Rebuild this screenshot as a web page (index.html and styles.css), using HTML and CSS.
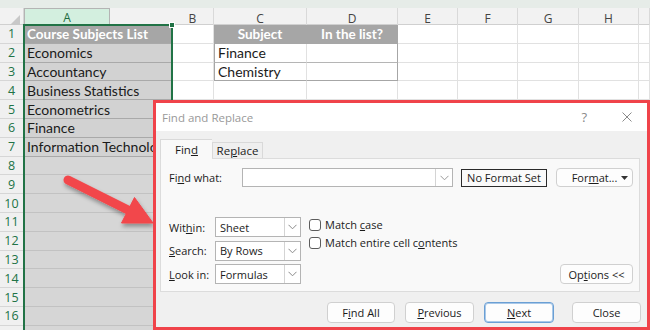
FILE: index.html
```html
<!DOCTYPE html>
<html>
<head>
<meta charset="utf-8">
<link rel="stylesheet" href="styles.css">
</head>
<body>
<div class="sheet">
  <div class="strip"></div>
  <div class="row hdr">
    <div class="corner"><svg width="12" height="12" viewBox="0 0 12 12"><polygon points="11,1 11,11 1,11" fill="#c8c8c8"/></svg></div>
    <div class="ch sel">A</div><div class="ch">B</div><div class="ch">C</div><div class="ch">D</div><div class="ch">E</div><div class="ch">F</div><div class="ch">G</div><div class="ch">H</div><div class="ch"></div>
  </div>
  <div class="row">
    <div class="rh">1</div><div class="c a ah">Course Subjects List</div><div class="c"></div><div class="c th">Subject</div><div class="c th">In the list?</div><div class="c"></div><div class="c"></div><div class="c"></div><div class="c"></div><div class="c"></div>
  </div>
  <div class="row">
    <div class="rh">2</div><div class="c a">Economics</div><div class="c"></div><div class="c tb tl">Finance</div><div class="c tb tr"></div><div class="c"></div><div class="c"></div><div class="c"></div><div class="c"></div><div class="c"></div>
  </div>
  <div class="row">
    <div class="rh">3</div><div class="c a">Accountancy</div><div class="c"></div><div class="c tb tl tbot">Chemistry</div><div class="c tb tr tbot"></div><div class="c"></div><div class="c"></div><div class="c"></div><div class="c"></div><div class="c"></div>
  </div>
  <div class="row">
    <div class="rh">4</div><div class="c a">Business Statistics</div><div class="c"></div><div class="c"></div><div class="c"></div><div class="c"></div><div class="c"></div><div class="c"></div><div class="c"></div><div class="c"></div>
  </div>
  <div class="row">
    <div class="rh">5</div><div class="c a">Econometrics</div><div class="c"></div><div class="c"></div><div class="c"></div><div class="c"></div><div class="c"></div><div class="c"></div><div class="c"></div><div class="c"></div>
  </div>
  <div class="row">
    <div class="rh">6</div><div class="c a">Finance</div><div class="c"></div><div class="c"></div><div class="c"></div><div class="c"></div><div class="c"></div><div class="c"></div><div class="c"></div><div class="c"></div>
  </div>
  <div class="row">
    <div class="rh">7</div><div class="c a">Information Technology</div><div class="c"></div><div class="c"></div><div class="c"></div><div class="c"></div><div class="c"></div><div class="c"></div><div class="c"></div><div class="c"></div>
  </div>
  <div class="row">
    <div class="rh">8</div><div class="c a e"></div><div class="c"></div><div class="c"></div><div class="c"></div><div class="c"></div><div class="c"></div><div class="c"></div><div class="c"></div><div class="c"></div>
  </div>
  <div class="row">
    <div class="rh">9</div><div class="c a e"></div><div class="c"></div><div class="c"></div><div class="c"></div><div class="c"></div><div class="c"></div><div class="c"></div><div class="c"></div><div class="c"></div>
  </div>
  <div class="row">
    <div class="rh">10</div><div class="c a e"></div><div class="c"></div><div class="c"></div><div class="c"></div><div class="c"></div><div class="c"></div><div class="c"></div><div class="c"></div><div class="c"></div>
  </div>
  <div class="row">
    <div class="rh">11</div><div class="c a e"></div><div class="c"></div><div class="c"></div><div class="c"></div><div class="c"></div><div class="c"></div><div class="c"></div><div class="c"></div><div class="c"></div>
  </div>
  <div class="row">
    <div class="rh">12</div><div class="c a e"></div><div class="c"></div><div class="c"></div><div class="c"></div><div class="c"></div><div class="c"></div><div class="c"></div><div class="c"></div><div class="c"></div>
  </div>
  <div class="row">
    <div class="rh">13</div><div class="c a e"></div><div class="c"></div><div class="c"></div><div class="c"></div><div class="c"></div><div class="c"></div><div class="c"></div><div class="c"></div><div class="c"></div>
  </div>
  <div class="row">
    <div class="rh">14</div><div class="c a e"></div><div class="c"></div><div class="c"></div><div class="c"></div><div class="c"></div><div class="c"></div><div class="c"></div><div class="c"></div><div class="c"></div>
  </div>
  <div class="row">
    <div class="rh">15</div><div class="c a e"></div><div class="c"></div><div class="c"></div><div class="c"></div><div class="c"></div><div class="c"></div><div class="c"></div><div class="c"></div><div class="c"></div>
  </div>
  <div class="row">
    <div class="rh">16</div><div class="c a e"></div><div class="c"></div><div class="c"></div><div class="c"></div><div class="c"></div><div class="c"></div><div class="c"></div><div class="c"></div><div class="c"></div>
  </div>
  <div class="row">
    <div class="rh"></div><div class="c a e"></div><div class="c"></div><div class="c"></div><div class="c"></div><div class="c"></div><div class="c"></div><div class="c"></div><div class="c"></div><div class="c"></div>
  </div>
</div>

<div class="selection"><span class="handle"></span></div>

<svg class="arrow" width="110" height="70" viewBox="0 0 110 70">
  <defs>
    <filter id="sh" x="-20%" y="-20%" width="140%" height="150%">
      <feDropShadow dx="1" dy="3" stdDeviation="2" flood-color="#000" flood-opacity="0.35"/>
    </filter>
  </defs>
  <g filter="url(#sh)" fill="#f2464b" stroke="#f2464b">
    <line x1="18" y1="15" x2="82" y2="47" stroke-width="9" stroke-linecap="round"/>
    <polygon points="103,58 71.5,58 84.5,32.5" stroke-width="1" stroke-linejoin="round"/>
  </g>
</svg>

<div class="dialog">
  <div class="titlebar">
    <span class="title">Find and Replace</span>
    <span class="help">?</span>
    <svg class="close-x" width="10" height="10" viewBox="0 0 10 10"><path d="M0.5 0.5 L9.5 9.5 M9.5 0.5 L0.5 9.5" stroke="#8a8a8a" stroke-width="1"/></svg>
  </div>
  <div class="dbody">
    <div class="tabs">
      <div class="tab active">Fin<u>d</u></div>
      <div class="tab">Re<u>p</u>lace</div>
    </div>
    <div class="panel">
      <div class="findrow">
        <span class="lbl fw">Fi<u>n</u>d what:</span>
        <div class="combo"><span class="ctext"></span><span class="cbtn"><svg width="9" height="6" viewBox="0 0 9 6"><path d="M0.5 0.8 L4.5 4.8 L8.5 0.8" fill="none" stroke="#9a9a9a" stroke-width="1"/></svg></span></div>
        <div class="nfs">No Format Set</div>
        <div class="btn fmt">For<u>m</u>at... <span class="caret"><svg width="7" height="4" viewBox="0 0 7 4"><polygon points="0,0 7,0 3.5,4" fill="#333"/></svg></span></div>
      </div>
      <div class="lower">
        <div class="opts">
          <div class="orow"><span class="lbl ol">Wit<u>h</u>in:</span><div class="sel"><span class="stext">Sheet</span><span class="sbtn"><svg width="9" height="6" viewBox="0 0 9 6"><path d="M0.5 0.8 L4.5 4.8 L8.5 0.8" fill="none" stroke="#8a8a8a" stroke-width="1"/></svg></span></div></div>
          <div class="orow"><span class="lbl ol"><u>S</u>earch:</span><div class="sel"><span class="stext">By Rows</span><span class="sbtn"><svg width="9" height="6" viewBox="0 0 9 6"><path d="M0.5 0.8 L4.5 4.8 L8.5 0.8" fill="none" stroke="#8a8a8a" stroke-width="1"/></svg></span></div></div>
          <div class="orow"><span class="lbl ol"><u>L</u>ook in:</span><div class="sel"><span class="stext">Formulas</span><span class="sbtn"><svg width="9" height="6" viewBox="0 0 9 6"><path d="M0.5 0.8 L4.5 4.8 L8.5 0.8" fill="none" stroke="#8a8a8a" stroke-width="1"/></svg></span></div></div>
        </div>
        <div class="checks">
          <div class="chk"><span class="box"></span><span>Match <u>c</u>ase</span></div>
          <div class="chk"><span class="box"></span><span>Match entire cell c<u>o</u>ntents</span></div>
        </div>
        <div class="btn options">Op<u>t</u>ions &lt;&lt;</div>
      </div>
    </div>
    <div class="buttons">
      <div class="btn b-findall">F<u>i</u>nd All</div>
      <div class="btn b-prev"><u>P</u>revious</div>
      <div class="btn b-next"><u>N</u>ext</div>
      <div class="btn b-close">Close</div>
    </div>
  </div>
</div>
</body>
</html>
```

FILE: styles.css
```css
* { box-sizing: border-box; }
html, body { margin: 0; padding: 0; }
body {
  width: 650px;
  height: 330px;
  overflow: hidden;
  position: relative;
  background: #ffffff;
  font-family: Lato, "Liberation Sans", sans-serif;
}
.sheet { display: flex; flex-direction: column; }
.strip { height: 8px; background: #e6ece8; }
.row {
  display: grid;
  grid-template-columns: 24px 148px 42px 93px 91px 60px 60px 61px 60px 11px;
  height: 18.8px;
  flex: none;
}
.row.hdr { height: 17px; background: #f2f2f2; border-bottom: 1px solid #d0d0d0; }
.corner { display: flex; align-items: flex-end; justify-content: flex-end; padding: 0 2px 2px 0; border-right: 1px solid #d6d6d6; }
.ch {
  display: flex; align-items: center; justify-content: center;
  font-family: "Open Sans", "Noto Sans", sans-serif;
  font-size: 12px; color: #444;
  border-right: 1px solid #d9d9d9;
}
.ch.sel { background: #d3efdf; color: #1d6b3e; border-bottom: 2px solid #217346; }
.rh {
  display: flex; align-items: center; justify-content: center;
  font-family: "Open Sans", "Noto Sans", sans-serif;
  font-size: 12.5px; color: #217346;
  background: #f0f0f0;
  border-bottom: 1px solid #d6d6d6;
  border-right: 1px solid #c8c8c8;
}
.c {
  border-right: 1px solid #e1e1e1;
  border-bottom: 1px solid #e1e1e1;
  font-size: 14px;
  color: #1a1a1a;
  padding-left: 3px;
  display: flex; align-items: center;
  white-space: nowrap;
  overflow: visible;
  min-width: 0;
}
.c.a { background: #d2d2d2; border-bottom-color: #a9a9a9; border-right-color: #a9a9a9; }
.c.a.e { background: #d6d6d6; border-bottom-color: #c2c2c2; border-right-color: #c6c6c6; }
.c.ah { background: #a6a6a6; color: #fff; font-weight: 700; font-size: 13.5px; }
.c.th { background: #a6a6a6; color: #fff; font-weight: 700; font-size: 13.5px; justify-content: center; padding-left: 0; border-right-color: #a6a6a6; border-bottom-color: #a6a6a6; }
.c.tb { border-bottom-color: #b5b5b5; }
.c.tl { border-left: 1px solid #a6a6a6; }
.c.tr { border-right-color: #a6a6a6; }
.c.tbot { border-bottom-color: #a6a6a6; }

.selection {
  position: absolute;
  left: 23px; top: 24px;
  width: 150px; height: 320px;
  border: 2px solid #217346;
  pointer-events: none;
}
.handle {
  position: absolute; right: -4px; top: -4px;
  width: 6px; height: 6px;
  background: #217346; border: 1px solid #fff;
}
.arrow { position: absolute; left: 50px; top: 165px; overflow: visible; }

.dialog {
  position: absolute;
  left: 153px; top: 100px;
  width: 497px; height: 230px;
  border: 3px solid #f0434a;
  background: #f0f0f0;
  font-family: "Open Sans", "Noto Sans", sans-serif;
  font-size: 11px;
  color: #1b1b1b;
  display: flex; flex-direction: column;
}
.titlebar {
  height: 28px; flex: none;
  background: #ffffff;
  display: flex; align-items: center;
  padding-left: 6px;
}
.title { color: #999; font-size: 11.5px; flex: 1; }
.help { color: #8a8a8a; font-size: 13px; margin-right: 35px; }
.close-x { margin-right: 15px; }
.dbody { flex: 1; display: flex; flex-direction: column; padding: 8px 7px 0 4px; }
.tabs { display: flex; align-items: flex-end; height: 19px; position: relative; z-index: 1; }
.tab {
  height: 16px;
  border: 1px solid #d9d9d9; border-bottom: none;
  background: #efefef;
  display: flex; align-items: center; justify-content: center;
  width: 51px;
  font-size: 11.5px;
}
.tab.active { height: 20px; width: 52px; background: #f9f9f9; margin-bottom: -1px; border-right: none; }
.panel {
  height: 134px; flex: none;
  background: #f9f9f9;
  border: 1px solid #dcdcdc;
  padding: 9px 6px 0 8px;
  display: flex; flex-direction: column;
}
.findrow { display: flex; align-items: center; height: 19px; }
.lbl.fw { width: 73px; }
.combo {
  width: 211px; height: 19px;
  background: #fff;
  border: 1px solid #b4b4b4;
  display: flex;
}
.ctext { flex: 1; }
.cbtn { width: 17px; border-left: 1px solid #d4d4d4; display: flex; align-items: center; justify-content: center; }
.nfs {
  margin-left: 8px;
  width: 86px; height: 18px;
  border: 1px solid #2b2b2b;
  background: #fafafa;
  display: flex; align-items: center; justify-content: center;
}
.btn {
  background: #fdfdfd;
  border: 1px solid #d0d0d0;
  border-radius: 4px;
  display: flex; align-items: center; justify-content: center;
  height: 21px;
}
.fmt { margin-left: 9px; width: 77px; height: 19px; position: relative; }
.caret { position: absolute; right: 4px; top: 7px; display: flex; }
.lower { display: flex; margin-top: 30px; height: 67px; }
.opts { display: flex; flex-direction: column; justify-content: space-between; }
.orow { display: flex; align-items: center; }
.lbl.ol { width: 46px; }
.sel {
  width: 86px; height: 20px;
  background: #fff;
  border: 1px solid #b4b4b4;
  display: flex;
}
.stext { flex: 1; padding-left: 4px; display: flex; align-items: center; }
.sbtn { width: 16px; border-left: 1px solid #d4d4d4; display: flex; align-items: center; justify-content: center; }
.checks { margin-left: 8px; display: flex; flex-direction: column; gap: 5px; padding-top: 1px; }
.chk { display: flex; align-items: center; height: 13px; }
.box { width: 12px; height: 12px; border: 1px solid #5c5c5c; border-radius: 3px; background: #fff; margin-right: 4px; }
.options { margin-left: auto; align-self: flex-end; width: 73px; height: 20px; margin-bottom: 0; }
.buttons { display: flex; justify-content: flex-end; margin-top: 10px; margin-right: -1px; }
.b-findall { width: 68px; }
.b-prev { width: 69px; margin-left: 10px; }
.b-next { width: 70px; margin-left: 10px; border-color: #6a9fd4; box-shadow: inset 0 0 0 1px #a9c8e8; }
.b-close { width: 69px; margin-left: 18px; }
u { text-underline-offset: 1px; }
```
